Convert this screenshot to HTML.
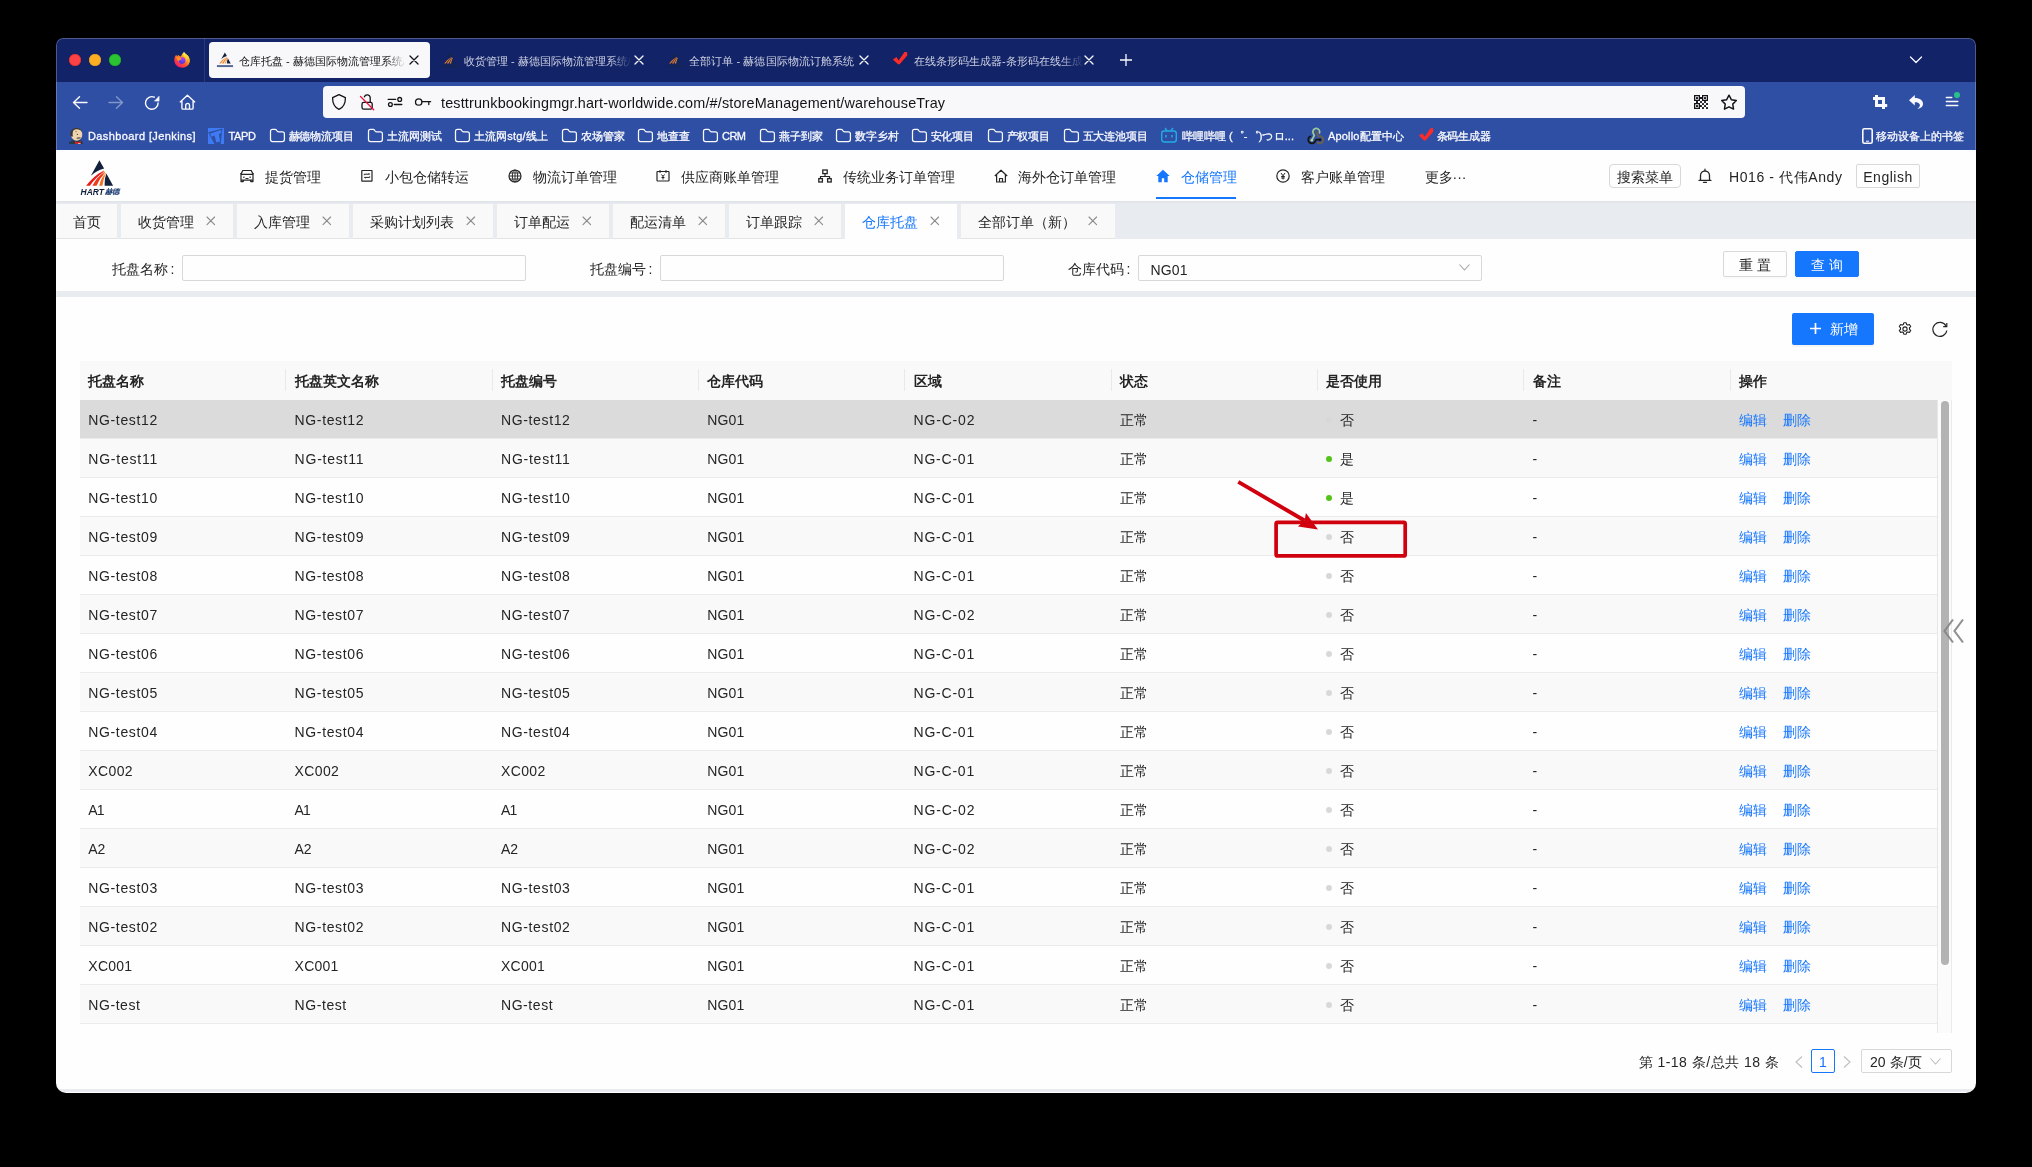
<!DOCTYPE html>
<html lang="zh"><head><meta charset="utf-8"><title>仓库托盘</title>
<style>
*{box-sizing:border-box;margin:0;padding:0}
html,body{width:2032px;height:1167px;background:#000;overflow:hidden}
body{font-family:"Liberation Sans",sans-serif;font-size:14px;color:#262626;position:relative}
#win{position:absolute;left:0;top:0;width:2032px;height:1167px;clip-path:inset(38px 56px 74px 56px round 7px 7px 10px 10px);background:#fff;will-change:transform;opacity:.9999}
.a{position:absolute;white-space:nowrap}
.j{display:inline-block;text-align-last:justify;white-space:nowrap}
svg{position:absolute;overflow:visible}
/* browser chrome */
#tabbar{left:56px;top:38px;width:1920px;height:44px;background:#132468}
#navbar{left:56px;top:82px;width:1920px;height:68px;background:#3050a5}
#chromeline{left:56px;top:150px;width:1920px;height:1px;background:#08196a}
#acttab{left:209px;top:42px;width:221px;height:36px;background:#f9f9fb;border-radius:4px}
#tabsep{left:204px;top:38px;width:1px;height:44px;background:#2a3a78}
.tl{width:11.8px;height:11.8px;border-radius:50%;top:54px}
.tt{font-size:11px;top:54px;line-height:14px;color:#cfd3e4;overflow:hidden;text-align-last:justify}
#urlbar{left:323px;top:86px;width:1422px;height:32px;background:#f9f9fb;border-radius:4px}
.url{left:441px;top:95px;font-size:14.4px;line-height:17px;color:#15141a}
.bm{top:129px;font-size:11px;line-height:14px;color:#fbfbfe;-webkit-text-stroke:.3px #fbfbfe}
/* app */
#header{left:56px;top:150px;width:1920px;height:51px;background:#fff}
#hshadow{left:56px;top:201px;width:1920px;height:3px;background:linear-gradient(#dfe2e7,#e9ecf0)}
#tabsbg{left:56px;top:201px;width:1920px;height:96px;background:#e9ecf0}
.mi{top:167.5px;line-height:18px;font-size:14px;color:#262626;letter-spacing:0}
.ptab{top:204px;height:35px;background:#fafafa;border-bottom:1px solid #e4e4e4;font-size:14px;line-height:36px;padding-left:16.5px;color:#262626}
.ptab.on{background:#fff;color:#1677ff;border-bottom:0}
.ptab i{position:absolute;right:17px;top:0;font-style:normal;color:#8c8c8c;font-size:13px}
#search{left:56px;top:239px;width:1920px;height:52px;background:#fff}
.lbl{top:260px;line-height:18px;font-size:14px}
.inp{top:255px;width:344px;height:26px;border:1px solid #d9d9d9;border-radius:2px;background:#fff}
.btn{height:26px;top:251px;width:64px;border:1px solid #d9d9d9;border-radius:2px;background:#fff;text-align:center;line-height:26px;font-size:14px;box-shadow:0 2px 0 rgba(0,0,0,.015)}
.btn.p{background:#1677ff;border-color:#1677ff;color:#fff}
#card{left:56px;top:297px;width:1920px;height:792px;background:#fff}
#thead{left:80px;top:361px;width:1872px;height:39px;background:#fafafa}
.th{top:361px;height:39px;line-height:40px;font-weight:bold;font-size:14px;color:#262626}
.ths{top:369px;width:1px;height:22px;background:#eaeaea}
.row{left:80px;width:1857px;height:39px;border-bottom:1px solid #ececec}
.row.e{background:#fafafa}
.row.h{background:#dcdcdc}
.c{height:39px;line-height:40px;font-size:14px;color:#262626}
.lk{color:#1677ff;letter-spacing:0}
.dot{width:6px;height:6px;border-radius:50%;background:#d9d9d9}
.dot.g{background:#52c41a}
#track{left:1937px;top:400px;width:15px;height:633px;background:#fcfcfc;border-left:1px solid #e8e8e8;border-right:1px solid #ececec}
#thumb{left:1941px;top:401px;width:8px;height:564px;background:#b4b4b4;border-radius:4px}
</style></head>
<body>
<div id="win">
<div class="a " id="tabbar"></div>
<div class="a " id="navbar"></div>
<div class="a " id="chromeline"></div>
<div class="a " id="tabsep"></div>
<div class="a " id="acttab"></div>
<div class="a tl" style="left:69px;background:#fd4346;box-shadow:inset 0 0 0 .6px #e2282c"></div>
<div class="a tl" style="left:89px;background:#fdb025;box-shadow:inset 0 0 0 .6px #e09b1f"></div>
<div class="a tl" style="left:109px;background:#2cc433;box-shadow:inset 0 0 0 .6px #1fa925"></div>
<div class="a tt" style="left:239px;width:165px;color:#15141a">仓库托盘 - 赫德国际物流管理系统/</div>
<div class="a tt" style="left:464px;width:166px">收货管理 - 赫德国际物流管理系统/</div>
<div class="a tt" style="left:689px;width:165.3px">全部订单 - 赫德国际物流订舱系统</div>
<div class="a tt" style="left:914px;width:168px">在线条形码生成器-条形码在线生成</div>
<div class="a " style="left:386px;top:52px;width:20px;height:18px;background:linear-gradient(90deg,rgba(249,249,251,0),#f9f9fb)"></div>
<div class="a " style="left:610px;top:52px;width:22px;height:18px;background:linear-gradient(90deg,rgba(19,36,104,0),#132468)"></div>
<div class="a " style="left:1060px;top:52px;width:24px;height:18px;background:linear-gradient(90deg,rgba(19,36,104,0),#132468)"></div>
<svg style="left:410px;top:56px" width="8" height="8" viewBox="0 0 8 8"><path d="M0 0L8 8M8 0L0 8" stroke="#15141a" stroke-width="1.3" fill="none" stroke-linecap="round"/></svg>
<svg style="left:635px;top:56px" width="8" height="8" viewBox="0 0 8 8"><path d="M0 0L8 8M8 0L0 8" stroke="#fbfbfe" stroke-width="1.3" fill="none" stroke-linecap="round"/></svg>
<svg style="left:860px;top:56px" width="8" height="8" viewBox="0 0 8 8"><path d="M0 0L8 8M8 0L0 8" stroke="#fbfbfe" stroke-width="1.3" fill="none" stroke-linecap="round"/></svg>
<svg style="left:1085px;top:56px" width="8" height="8" viewBox="0 0 8 8"><path d="M0 0L8 8M8 0L0 8" stroke="#fbfbfe" stroke-width="1.3" fill="none" stroke-linecap="round"/></svg>
<svg style="left:0;top:0" width="2032" height="1167" viewBox="0 0 2032 1167"><path transform="translate(0 0)" d="M892.9 59.4L896.5 57.1 898.6 60.6 904.5 52 907 51.9 907.3 55.5 899.6 64.3H898z" fill="#fb2c2a"/></svg>
<svg style="left:1120px;top:54px" width="12" height="12" viewBox="0 0 12 12"><path d="M6 0V12M0 6H12" stroke="#fbfbfe" stroke-width="1.3" fill="none"/></svg>
<svg style="left:1910px;top:56px" width="12" height="8" viewBox="0 0 12 8"><path d="M.5 1L6 6.5 11.5 1" stroke="#fbfbfe" stroke-width="1.3" fill="none" stroke-linecap="round" stroke-linejoin="round"/></svg>
<div class="a " id="urlbar"></div>
<div class="a url" id="f1" style=";letter-spacing:0.160px;width:504.20px;text-align-last:justify">testtrunkbookingmgr.hart-worldwide.com/#/storeManagement/warehouseTray</div>
<svg style="left:0;top:0" width="2032" height="1167" viewBox="0 0 2032 1167" fill="none" stroke-linecap="round" stroke-linejoin="round"><path d="M87 102.5H73.6M79.5 96.7L73.5 102.5 79.5 108.3" stroke="#fbfbfe" stroke-width="1.4"/><path d="M109 102.5H122.4M116.5 96.7L122.5 102.5 116.5 108.3" stroke="#fbfbfe" stroke-width="1.4" opacity=".42"/><path d="M158.1 103A6.3 6.3 0 1 1 154.3 97.2" stroke="#fbfbfe" stroke-width="1.4"/><path d="M154.6 100.9L159.1 96.2V100.9z" fill="#fbfbfe" stroke="#fbfbfe" stroke-width=".5"/><path d="M180.2 101.9L187.4 95.3 194.7 101.9M181.9 100.6V107.9a1.2 1.2 0 0 0 1.2 1.2H191.9a1.2 1.2 0 0 0 1.2-1.2V100.6M185.7 109V105.3a1.9 1.9 0 0 1 3.8 0V109" stroke="#fbfbfe" stroke-width="1.4"/><path d="M339 94.6L345.4 97.7C345.5 103.5 343.4 107.3 339 109.4 334.6 107.3 332.5 103.5 332.6 97.7z" stroke="#15141a" stroke-width="1.3"/><rect x="362" y="102.3" width="10.2" height="6.8" rx="1.6" stroke="#15141a" stroke-width="1.3"/><path d="M364.4 96.8A3 3 0 0 1 370.2 97.8V102" stroke="#15141a" stroke-width="1.3"/><path d="M360.5 96.5L373.7 109.8" stroke="#e8163c" stroke-width="1.3"/><path d="M388.2 99.4H395.7M394.3 104.5H401.8" stroke="#15141a" stroke-width="1.3"/><circle cx="399.7" cy="99.4" r="1.9" stroke="#15141a" stroke-width="1.3"/><circle cx="390.4" cy="104.5" r="1.9" stroke="#15141a" stroke-width="1.3"/><circle cx="418.7" cy="102" r="3.2" stroke="#15141a" stroke-width="1.3"/><path d="M422 101.7H430.6M428.8 101.9V104.6" stroke="#15141a" stroke-width="1.3"/><path d="M1694 95h6v6h-6zM1695.25 96.25h3.5v3.5h-3.5z" fill="#15141a" fill-rule="evenodd"/><rect x="1696" y="97" width="2" height="2" rx=".6" fill="#15141a"/><path d="M1702 95h6v6h-6zM1703.25 96.25h3.5v3.5h-3.5z" fill="#15141a" fill-rule="evenodd"/><rect x="1704" y="97" width="2" height="2" rx=".6" fill="#15141a"/><path d="M1694 103h6v6h-6zM1695.25 104.25h3.5v3.5h-3.5z" fill="#15141a" fill-rule="evenodd"/><rect x="1696" y="105" width="2" height="2" rx=".6" fill="#15141a"/><rect x="1700.05" y="97.05" width="1.9" height="1.9" rx=".5" fill="#15141a"/><rect x="1696.05" y="101.05" width="1.9" height="1.9" rx=".5" fill="#15141a"/><rect x="1700.05" y="101.05" width="1.9" height="1.9" rx=".5" fill="#15141a"/><rect x="1704.05" y="101.05" width="1.9" height="1.9" rx=".5" fill="#15141a"/><rect x="1702.05" y="103.05" width="1.9" height="1.9" rx=".5" fill="#15141a"/><rect x="1706.05" y="103.05" width="1.9" height="1.9" rx=".5" fill="#15141a"/><rect x="1700.05" y="105.05" width="1.9" height="1.9" rx=".5" fill="#15141a"/><rect x="1704.05" y="105.05" width="1.9" height="1.9" rx=".5" fill="#15141a"/><rect x="1702.05" y="107.05" width="1.9" height="1.9" rx=".5" fill="#15141a"/><rect x="1706.05" y="107.05" width="1.9" height="1.9" rx=".5" fill="#15141a"/><path d="M1699.5 98H1702.5M1697 100.5V103.5M1699.5 106H1701" stroke="#15141a" stroke-width="1.5" stroke-linecap="butt"/><path d="M1729.00 95.20L1731.32 99.70L1736.32 100.52L1732.76 104.12L1733.53 109.13L1729.00 106.85L1724.47 109.13L1725.24 104.12L1721.68 100.52L1726.68 99.70z" stroke="#15141a" stroke-width="1.450"/><path d="M1876.5 94.9V105.5H1887.2M1873 98.5H1883.5V108.9" stroke="#fbfbfe" stroke-width="3" stroke-linecap="butt" stroke-linejoin="miter"/><path d="M1909 100.2L1914.8 95V98C1920 98 1923.3 100.6 1923 104.2 1922.8 106.6 1921 108.3 1917.3 108.9 1919.5 107.8 1920.2 106 1919.8 104.6 1919.2 102.8 1917.5 102.3 1914.8 102.3V105.4z" fill="#fbfbfe" stroke="none"/><path d="M1946.3 97.5H1951.8M1946.3 101.5H1957.8M1946.3 105.5H1957.8" stroke="#fbfbfe" stroke-width="1.4"/><circle cx="1957" cy="95.1" r="3.050" fill="#2cbe8c"/></svg>
<svg style="left:0;top:0" width="2032" height="1167" viewBox="0 0 2032 1167"><path d="M68.9 144C69 141.8 70.5 140.5 73 140.2L80 140.2C82 140.5 82.9 141.8 82.9 144z" fill="#223e4d"/><ellipse cx="76.6" cy="134.4" rx="5.7" ry="6.3" fill="#f0d6b0"/><path d="M70.9 136.5C69.8 134 70.2 131 72.5 129.3 74.5 127.8 78.5 127.6 80.5 129.2 81.5 130 82 131 82.2 132 81 130.3 79 129.2 76.5 129.3 74.5 129.4 73.2 130.3 72.8 132 72.5 133.5 72.6 135 72.9 136.5z" fill="#3a3633"/><ellipse cx="78.6" cy="138.1" rx="2.2" ry="1" fill="#857a66" transform="rotate(-8 78.6 138.1)"/><circle cx="77.4" cy="134.4" r=".7" fill="#5a4d3d"/><path d="M75 131.7H76.8" stroke="#8a7a62" stroke-width=".8"/><path d="M75 141L77.8 142.3 80.8 140.9V144H75z" fill="#d81f26"/><path d="M78 143.3H80.5V144H78z" fill="#e8e8e8"/></svg>
<div class="a bm" id="f2" style="left:88px;letter-spacing:0.401px;width:107.92px;text-align-last:justify">Dashboard [Jenkins]</div>
<svg style="left:0;top:0" width="2032" height="1167" viewBox="0 0 2032 1167"><rect x="208" y="128" width="16" height="16" fill="#3f7bf5"/><path d="M208.2 132.3L222.4 128.5 220.7 144H214.5z" fill="#3050a5"/><path d="M210.1 133.7L220.6 130 221.8 132.8 218.9 133.9 220.2 141.5 216.3 142.5 214.6 135.6 211.5 136.8z" fill="#3f7bf5"/></svg>
<div class="a bm" id="f3" style="left:228.5px;letter-spacing:-0.344px;width:27.18px;text-align-last:justify">TAPD</div>
<svg style="left:0;top:0" width="2032" height="1167" viewBox="0 0 2032 1167"><path transform="translate(0 0)" d="M270.5 131.4a2 2 0 0 1 2-2h2.6c.8 0 1.2.4 1.6 1l.5.7c.4.5.8.7 1.4.7h3.8a2 2 0 0 1 2 2v5.8a2 2 0 0 1-2 2h-9.9a2 2 0 0 1-2-2z" stroke="#fbfbfe" stroke-width="1.250" fill="none"/></svg>
<div class="a bm" id="f4" style="left:288.5px;letter-spacing:-0.100px;width:65.42px;text-align-last:justify">赫德物流项目</div>
<svg style="left:0;top:0" width="2032" height="1167" viewBox="0 0 2032 1167"><path transform="translate(98 0)" d="M270.5 131.4a2 2 0 0 1 2-2h2.6c.8 0 1.2.4 1.6 1l.5.7c.4.5.8.7 1.4.7h3.8a2 2 0 0 1 2 2v5.8a2 2 0 0 1-2 2h-9.9a2 2 0 0 1-2-2z" stroke="#fbfbfe" stroke-width="1.250" fill="none"/></svg>
<div class="a bm" id="f5" style="left:387px;letter-spacing:0.000px;width:55.02px;text-align-last:justify">土流网测试</div>
<svg style="left:0;top:0" width="2032" height="1167" viewBox="0 0 2032 1167"><path transform="translate(185 0)" d="M270.5 131.4a2 2 0 0 1 2-2h2.6c.8 0 1.2.4 1.6 1l.5.7c.4.5.8.7 1.4.7h3.8a2 2 0 0 1 2 2v5.8a2 2 0 0 1-2 2h-9.9a2 2 0 0 1-2-2z" stroke="#fbfbfe" stroke-width="1.250" fill="none"/></svg>
<div class="a bm" id="f6" style="left:473.5px;letter-spacing:0.221px;width:74.74px;text-align-last:justify">土流网stg/线上</div>
<svg style="left:0;top:0" width="2032" height="1167" viewBox="0 0 2032 1167"><path transform="translate(292 0)" d="M270.5 131.4a2 2 0 0 1 2-2h2.6c.8 0 1.2.4 1.6 1l.5.7c.4.5.8.7 1.4.7h3.8a2 2 0 0 1 2 2v5.8a2 2 0 0 1-2 2h-9.9a2 2 0 0 1-2-2z" stroke="#fbfbfe" stroke-width="1.250" fill="none"/></svg>
<div class="a bm" id="f7" style="left:580.5px;letter-spacing:0.000px;width:44.02px;text-align-last:justify">农场管家</div>
<svg style="left:0;top:0" width="2032" height="1167" viewBox="0 0 2032 1167"><path transform="translate(368 0)" d="M270.5 131.4a2 2 0 0 1 2-2h2.6c.8 0 1.2.4 1.6 1l.5.7c.4.5.8.7 1.4.7h3.8a2 2 0 0 1 2 2v5.8a2 2 0 0 1-2 2h-9.9a2 2 0 0 1-2-2z" stroke="#fbfbfe" stroke-width="1.250" fill="none"/></svg>
<div class="a bm" id="f8" style="left:656.5px;letter-spacing:0.000px;width:33.02px;text-align-last:justify">地查查</div>
<svg style="left:0;top:0" width="2032" height="1167" viewBox="0 0 2032 1167"><path transform="translate(433 0)" d="M270.5 131.4a2 2 0 0 1 2-2h2.6c.8 0 1.2.4 1.6 1l.5.7c.4.5.8.7 1.4.7h3.8a2 2 0 0 1 2 2v5.8a2 2 0 0 1-2 2h-9.9a2 2 0 0 1-2-2z" stroke="#fbfbfe" stroke-width="1.250" fill="none"/></svg>
<div class="a bm" id="f9" style="left:722px;letter-spacing:-0.531px;width:23.49px;text-align-last:justify">CRM</div>
<svg style="left:0;top:0" width="2032" height="1167" viewBox="0 0 2032 1167"><path transform="translate(490 0)" d="M270.5 131.4a2 2 0 0 1 2-2h2.6c.8 0 1.2.4 1.6 1l.5.7c.4.5.8.7 1.4.7h3.8a2 2 0 0 1 2 2v5.8a2 2 0 0 1-2 2h-9.9a2 2 0 0 1-2-2z" stroke="#fbfbfe" stroke-width="1.250" fill="none"/></svg>
<div class="a bm" id="f10" style="left:778.5px;letter-spacing:0.000px;width:44.02px;text-align-last:justify">燕子到家</div>
<svg style="left:0;top:0" width="2032" height="1167" viewBox="0 0 2032 1167"><path transform="translate(566 0)" d="M270.5 131.4a2 2 0 0 1 2-2h2.6c.8 0 1.2.4 1.6 1l.5.7c.4.5.8.7 1.4.7h3.8a2 2 0 0 1 2 2v5.8a2 2 0 0 1-2 2h-9.9a2 2 0 0 1-2-2z" stroke="#fbfbfe" stroke-width="1.250" fill="none"/></svg>
<div class="a bm" id="f11" style="left:854.5px;letter-spacing:0.000px;width:44.02px;text-align-last:justify">数字乡村</div>
<svg style="left:0;top:0" width="2032" height="1167" viewBox="0 0 2032 1167"><path transform="translate(642 0)" d="M270.5 131.4a2 2 0 0 1 2-2h2.6c.8 0 1.2.4 1.6 1l.5.7c.4.5.8.7 1.4.7h3.8a2 2 0 0 1 2 2v5.8a2 2 0 0 1-2 2h-9.9a2 2 0 0 1-2-2z" stroke="#fbfbfe" stroke-width="1.250" fill="none"/></svg>
<div class="a bm" id="f12" style="left:930.5px;letter-spacing:-0.167px;width:43.35px;text-align-last:justify">安化项目</div>
<svg style="left:0;top:0" width="2032" height="1167" viewBox="0 0 2032 1167"><path transform="translate(718 0)" d="M270.5 131.4a2 2 0 0 1 2-2h2.6c.8 0 1.2.4 1.6 1l.5.7c.4.5.8.7 1.4.7h3.8a2 2 0 0 1 2 2v5.8a2 2 0 0 1-2 2h-9.9a2 2 0 0 1-2-2z" stroke="#fbfbfe" stroke-width="1.250" fill="none"/></svg>
<div class="a bm" id="f13" style="left:1006.5px;letter-spacing:-0.167px;width:43.35px;text-align-last:justify">产权项目</div>
<svg style="left:0;top:0" width="2032" height="1167" viewBox="0 0 2032 1167"><path transform="translate(794 0)" d="M270.5 131.4a2 2 0 0 1 2-2h2.6c.8 0 1.2.4 1.6 1l.5.7c.4.5.8.7 1.4.7h3.8a2 2 0 0 1 2 2v5.8a2 2 0 0 1-2 2h-9.9a2 2 0 0 1-2-2z" stroke="#fbfbfe" stroke-width="1.250" fill="none"/></svg>
<div class="a bm" id="f14" style="left:1082.5px;letter-spacing:-0.100px;width:65.42px;text-align-last:justify">五大连池项目</div>
<svg style="left:1161px;top:128px" width="16" height="15" viewBox="0 0 16 15"><path d="M4 0l2 2.5M12 0l-2 2.5" stroke="#23ade5" stroke-width="1.3" fill="none"/><rect x=".7" y="3" width="14.6" height="11" rx="2.5" stroke="#23ade5" stroke-width="1.4" fill="none"/><path d="M5 7v2.5M11 7v2.5" stroke="#23ade5" stroke-width="1.5"/></svg>
<div class="a bm" id="f15" style="left:1181.5px;letter-spacing:0.092px;width:112.62px;text-align-last:justify">哔哩哔哩 (゜-゜)つロ...</div>
<svg style="left:0;top:0" width="2032" height="1167" viewBox="0 0 2032 1167" fill="none" stroke-width="1.750" stroke-linecap="round"><path d="M1319.5 132.9A3.4 3.4 0 1 0 1313.3 133.5L1314.3 135.4 1311.8 140.2" stroke="#9cc89a"/><path d="M1310.5 136.3A3.7 3.7 0 1 0 1315.4 141C1315.5 139.9 1316.2 139.7 1317 139.7H1320" stroke="#17150f"/><path d="M1316.2 131.8L1318.4 136.6A3.5 3.5 0 1 1 1317.5 142.5" stroke="#6b6250"/><circle cx="1311.8" cy="140.3" r="1.3" fill="#b7db92" stroke="none"/><circle cx="1316.2" cy="131.9" r="1.1" fill="#6b5a42" stroke="none"/><circle cx="1320.1" cy="139.7" r="1.3" fill="#17150f" stroke="none"/></svg>
<div class="a bm" id="f16" style="left:1328px;letter-spacing:0.158px;width:76.18px;text-align-last:justify">Apollo配置中心</div>
<svg style="left:0;top:0" width="2032" height="1167" viewBox="0 0 2032 1167"><path transform="translate(526 76.2)" d="M892.9 59.4L896.5 57.1 898.6 60.6 904.5 52 907 51.9 907.3 55.5 899.6 64.3H898z" fill="#fb2c2a"/></svg>
<div class="a bm" id="f17" style="left:1436.5px;letter-spacing:-0.125px;width:54.40px;text-align-last:justify">条码生成器</div>
<svg style="left:1862px;top:128px" width="11" height="16" viewBox="0 0 11 16"><rect x=".8" y=".8" width="9.4" height="14.4" rx="1.5" stroke="#fbfbfe" stroke-width="1.6" fill="none"/><path d="M4 13.2H7" stroke="#fbfbfe" stroke-width="1"/></svg>
<div class="a bm" id="f18" style="left:1876px;letter-spacing:0.000px;width:88.02px;text-align-last:justify">移动设备上的书签</div>
<div class="a " id="tabsbg"></div>
<div class="a " id="header"></div>
<div class="a " id="hshadow"></div>
<svg style="left:0;top:0" width="2032" height="1167" viewBox="0 0 2032 1167"><defs><linearGradient id="lg1" gradientUnits="userSpaceOnUse" x1="88" y1="186" x2="106" y2="170.5"><stop offset="0" stop-color="#e8201a"/><stop offset=".72" stop-color="#e8201a"/><stop offset="1" stop-color="#f7a35c"/></linearGradient><linearGradient id="lg2" gradientUnits="userSpaceOnUse" x1="88" y1="186" x2="106" y2="170.5"><stop offset="0" stop-color="#ee3b1b"/><stop offset=".72" stop-color="#ee3b1b"/><stop offset="1" stop-color="#f9b06a"/></linearGradient><linearGradient id="lg3" gradientUnits="userSpaceOnUse" x1="88" y1="186" x2="106" y2="170.5"><stop offset="0" stop-color="#f25f21"/><stop offset=".72" stop-color="#f47a2b"/><stop offset="1" stop-color="#fbc084"/></linearGradient><linearGradient id="ffb" gradientUnits="userSpaceOnUse" x1="188" y1="53" x2="177" y2="67"><stop offset="0" stop-color="#fff44f"/><stop offset=".3" stop-color="#ffb01f"/><stop offset=".6" stop-color="#ff5a2a"/><stop offset="1" stop-color="#f0127a"/></linearGradient><linearGradient id="ffy" gradientUnits="userSpaceOnUse" x1="185" y1="52" x2="187.5" y2="64"><stop offset="0" stop-color="#fff44f"/><stop offset="1" stop-color="#ffa51f"/></linearGradient><linearGradient id="ffg" gradientUnits="userSpaceOnUse" x1="183" y1="57" x2="181" y2="64"><stop offset="0" stop-color="#c139e6"/><stop offset=".5" stop-color="#7542ff"/><stop offset="1" stop-color="#3c35d8"/></linearGradient></defs><g><path d="M99.4 160.3L104.1 168.4Q96 170.5 90.9 175.8z" fill="#14213d"/><path d="M106.4 173.6L113.1 185.7H104.6Q104.3 178.5 106.4 173.6z" fill="#14213d"/><g opacity="1"><path d="M86.1 185.7Q93 176.5 103.6 170.5L104.4 171.4Q95.5 177.5 89.9 185.7z" fill="url(#lg1)"/><path d="M92.4 185.7Q97 177 104.7 171.6L105.3 172.5Q99.5 178.5 96.5 185.7z" fill="url(#lg2)"/><path d="M99.2 185.7Q101 178 105.6 172.7L106.1 173.6Q103.2 179 102.4 185.7z" fill="url(#lg3)"/></g><text x="80.6" y="194.7" font-family="Liberation Sans" font-weight="bold" font-style="italic" font-size="8.8" fill="#14213d" textLength="23.4" lengthAdjust="spacingAndGlyphs">HART</text><text x="104.6" y="194.4" font-family="Liberation Sans" font-weight="bold" font-style="italic" font-size="7.2" fill="#1d3d73" textLength="14.4" lengthAdjust="spacingAndGlyphs">赫德</text></g><g transform="translate(182.1 -16.4) scale(.43)"><path d="M99.4 160.3L104.1 168.4Q96 170.5 90.9 175.8z" fill="#14213d"/><path d="M106.4 173.6L113.1 185.7H104.6Q104.3 178.5 106.4 173.6z" fill="#14213d"/><g opacity="1"><path d="M86.1 185.7Q93 176.5 103.6 170.5L104.4 171.4Q95.5 177.5 89.9 185.7z" fill="#f58220"/><path d="M92.4 185.7Q97 177 104.7 171.6L105.3 172.5Q99.5 178.5 96.5 185.7z" fill="#f58220"/><path d="M99.2 185.7Q101 178 105.6 172.7L106.1 173.6Q103.2 179 102.4 185.7z" fill="#f7953a"/></g><rect x="81" y="189.5" width="37.5" height="4.6" fill="#3b5283" opacity=".85"/></g><g transform="translate(407.1 -16.4) scale(.43)"><path d="M99.4 160.3L104.1 168.4Q96 170.5 90.9 175.8z" fill="#17264f"/><path d="M106.4 173.6L113.1 185.7H104.6Q104.3 178.5 106.4 173.6z" fill="#17264f"/><g opacity="0.95"><path d="M86.1 185.7Q93 176.5 103.6 170.5L104.4 171.4Q95.5 177.5 89.9 185.7z" fill="#f58220"/><path d="M92.4 185.7Q97 177 104.7 171.6L105.3 172.5Q99.5 178.5 96.5 185.7z" fill="#f58220"/><path d="M99.2 185.7Q101 178 105.6 172.7L106.1 173.6Q103.2 179 102.4 185.7z" fill="#f7953a"/></g><rect x="81" y="189.5" width="37.5" height="4.6" fill="#17264f" opacity=".85"/></g><g transform="translate(632.1 -16.4) scale(.43)"><path d="M99.4 160.3L104.1 168.4Q96 170.5 90.9 175.8z" fill="#17264f"/><path d="M106.4 173.6L113.1 185.7H104.6Q104.3 178.5 106.4 173.6z" fill="#17264f"/><g opacity="0.95"><path d="M86.1 185.7Q93 176.5 103.6 170.5L104.4 171.4Q95.5 177.5 89.9 185.7z" fill="#f58220"/><path d="M92.4 185.7Q97 177 104.7 171.6L105.3 172.5Q99.5 178.5 96.5 185.7z" fill="#f58220"/><path d="M99.2 185.7Q101 178 105.6 172.7L106.1 173.6Q103.2 179 102.4 185.7z" fill="#f7953a"/></g><rect x="81" y="189.5" width="37.5" height="4.6" fill="#17264f" opacity=".85"/></g><path d="M184 51.9C185 53.6 187.2 54.6 188.5 56.6 190.1 59.1 190 62.6 188.5 64.7 186.8 67 183.8 67.8 181.4 67.6 177.4 67.3 174.3 64.3 174.3 60 174.3 57.8 175 56 176.3 54.7 176.5 55.5 176.8 56 177.3 56.3 177.6 55.6 178 55.2 178.6 55 179 55.8 179.8 56.3 180.9 56.5 181.5 55 182.3 53.5 184 51.9z" fill="url(#ffb)"/><path d="M184 51.9C185 53.6 187.2 54.6 188.5 56.6 190.1 59.1 190 62.6 188.5 64.7 189.2 62 188.6 59.6 187.1 58 187.3 59.5 187 60.6 186.5 61.5 186.4 58.2 184.5 56.8 183.6 55.5 183 54.5 183.2 53 184 51.9z" fill="url(#ffy)"/><circle cx="182.1" cy="60.6" r="3.3" fill="url(#ffg)"/><path d="M176.2 57.3C178 56.9 180.6 57.4 182.3 59.3 180.7 59.2 179.6 59.8 179.1 61 177.8 60.6 176.6 59.3 176.2 57.3z" fill="#ff9a1f"/></svg>
<svg style="left:240px;top:169px" width="14" height="14" viewBox="0 0 14 14"><path d="M1 5.3L2.7 1.5H11.3L13 5.3M1 5.3H13V11.2H1zM1 11.2V12.6H3.3V11.2M10.7 11.2V12.6H13V11.2M.2 4.7H1.1M12.9 4.7H13.8" stroke="#262626" stroke-width="1.2" fill="none" stroke-linejoin="round"/><path d="M3 8.2H4.7M9.3 8.2H11M5.5 9.5H8.5" stroke="#262626" stroke-width="1"/></svg>
<div class="a mi" style="left:265px;color:#262626;width:56px;text-align-last:justify">提货管理</div>
<svg style="left:360px;top:169px" width="14" height="14" viewBox="0 0 14 14"><rect x="1.8" y="1.5" width="10.2" height="10.6" rx=".3" stroke="#262626" stroke-width="1.2" fill="none"/><path d="M4.3 6.2V5.2H9.6L8.6 4.2M9.7 7.4V8.4H4.4L5.4 9.4" stroke="#262626" stroke-width="1" fill="none"/></svg>
<div class="a mi" style="left:385px;color:#262626;width:84px;text-align-last:justify">小包仓储转运</div>
<svg style="left:507.5px;top:169px" width="14" height="14" viewBox="0 0 14 14"><circle cx="7" cy="7" r="6" stroke="#262626" stroke-width="1.2" fill="none"/><ellipse cx="7" cy="7" rx="2.7" ry="6" stroke="#262626" stroke-width="1" fill="none"/><path d="M1 7h12M2 4h10M2 10h10M7 1v12" stroke="#262626" stroke-width=".9" fill="none"/></svg>
<div class="a mi" style="left:532.5px;color:#262626;width:84px;text-align-last:justify">物流订单管理</div>
<svg style="left:656px;top:169px" width="14" height="14" viewBox="0 0 14 14"><rect x="1" y="2.5" width="12" height="9.5" rx=".5" stroke="#262626" stroke-width="1.2" fill="none"/><path d="M4 1v3M10 1v3M5.5 5.5L7 7.5l1.5-2M7 7.5v3M5.5 8.5h3" stroke="#262626" stroke-width="1" fill="none"/></svg>
<div class="a mi" style="left:680.5px;color:#262626;width:98px;text-align-last:justify">供应商账单管理</div>
<svg style="left:818px;top:169px" width="14" height="14" viewBox="0 0 14 14"><rect x="4.8" y="1" width="4.4" height="3.6" stroke="#262626" stroke-width="1.3" fill="none"/><path d="M7 4.6V7.5M2.5 9.5V7.5h9v2" stroke="#262626" stroke-width="1.2" fill="none"/><rect x=".8" y="9.6" width="3.6" height="3.4" stroke="#262626" stroke-width="1.3" fill="none"/><rect x="9.6" y="9.6" width="3.6" height="3.4" stroke="#262626" stroke-width="1.3" fill="none"/></svg>
<div class="a mi" style="left:842.5px;color:#262626;width:112px;text-align-last:justify">传统业务订单管理</div>
<svg style="left:994px;top:169px" width="14" height="14" viewBox="0 0 14 14"><path d="M.8 7L7 1.2 13.2 7M2.6 5.8V13h8.8V5.8M5.5 13V9.5h3V13" stroke="#262626" stroke-width="1.2" fill="none" stroke-linejoin="round"/><g fill="#262626"/></svg>
<div class="a mi" style="left:1018px;color:#262626;width:98px;text-align-last:justify">海外仓订单管理</div>
<svg style="left:1156px;top:169px" width="14" height="14" viewBox="0 0 14 14"><path d="M7 .8L.3 7h2V13.2h3.5V9.2h2.4v4h3.5V7h2z" fill="#1677ff"/><g fill="#1677ff"/></svg>
<div class="a mi" style="left:1180.5px;color:#1677ff;width:56px;text-align-last:justify">仓储管理</div>
<svg style="left:1276px;top:169px" width="14" height="14" viewBox="0 0 14 14"><circle cx="7" cy="7" r="6.2" stroke="#262626" stroke-width="1.2" fill="none"/><path d="M5 4l2 2.8L9 4M7 6.8V10.5M5.2 7.5h3.6M5.2 9h3.6" stroke="#262626" stroke-width="1" fill="none"/></svg>
<div class="a mi" style="left:1300.5px;color:#262626;width:84px;text-align-last:justify">客户账单管理</div>
<div class="a mi" style="left:1424.5px">更多···</div>
<div class="a " style="left:1156px;top:197px;width:80px;height:2px;background:#1677ff"></div>
<div class="a " style="left:1609px;top:164px;width:72px;height:24px;border:1px solid #d9d9d9;border-radius:4px;text-align:center;line-height:24px;font-size:14px"><span class="j" style="width:56px">搜索菜单</span></div>
<svg style="left:1698px;top:168px" width="14" height="16" viewBox="0 0 14 16"><path d="M7 1.2V2.5M2.5 12V7.5a4.5 4.5 0 0 1 9 0V12M1 12.3H13M5.5 14.3H8.5" stroke="#262626" stroke-width="1.3" fill="none" stroke-linecap="round"/></svg>
<div class="a mi" id="f19" style="left:1729px;letter-spacing:0.598px;width:113.62px;text-align-last:justify">H016 - 代伟Andy</div>
<div class="a " style="left:1856px;top:164px;width:64px;height:24px;border:1px solid #d9d9d9;border-radius:2px;text-align:center;line-height:24px;font-size:14px;letter-spacing:.5px">English</div>
<div class="a ptab" style="left:56px;width:61px"><span class="j" style="width:28px">首页</span></div>
<div class="a ptab" style="left:121px;width:112px"><span class="j" style="width:56px">收货管理</span></div>
<svg style="left:207.2px;top:217.1px" width="7.6" height="7.6" viewBox="0 0 7.6 7.6"><path d="M0 0L7.6 7.6M7.6 0L0 7.6" stroke="#8c8c8c" stroke-width="1.1" fill="none" stroke-linecap="round"/></svg>
<div class="a ptab" style="left:237px;width:112px"><span class="j" style="width:56px">入库管理</span></div>
<svg style="left:323.2px;top:217.1px" width="7.6" height="7.6" viewBox="0 0 7.6 7.6"><path d="M0 0L7.6 7.6M7.6 0L0 7.6" stroke="#8c8c8c" stroke-width="1.1" fill="none" stroke-linecap="round"/></svg>
<div class="a ptab" style="left:353px;width:140px"><span class="j" style="width:84px">采购计划列表</span></div>
<svg style="left:467.2px;top:217.1px" width="7.6" height="7.6" viewBox="0 0 7.6 7.6"><path d="M0 0L7.6 7.6M7.6 0L0 7.6" stroke="#8c8c8c" stroke-width="1.1" fill="none" stroke-linecap="round"/></svg>
<div class="a ptab" style="left:497px;width:112px"><span class="j" style="width:56px">订单配运</span></div>
<svg style="left:583.2px;top:217.1px" width="7.6" height="7.6" viewBox="0 0 7.6 7.6"><path d="M0 0L7.6 7.6M7.6 0L0 7.6" stroke="#8c8c8c" stroke-width="1.1" fill="none" stroke-linecap="round"/></svg>
<div class="a ptab" style="left:613px;width:112px"><span class="j" style="width:56px">配运清单</span></div>
<svg style="left:699.2px;top:217.1px" width="7.6" height="7.6" viewBox="0 0 7.6 7.6"><path d="M0 0L7.6 7.6M7.6 0L0 7.6" stroke="#8c8c8c" stroke-width="1.1" fill="none" stroke-linecap="round"/></svg>
<div class="a ptab" style="left:729px;width:112px"><span class="j" style="width:56px">订单跟踪</span></div>
<svg style="left:815.2px;top:217.1px" width="7.6" height="7.6" viewBox="0 0 7.6 7.6"><path d="M0 0L7.6 7.6M7.6 0L0 7.6" stroke="#8c8c8c" stroke-width="1.1" fill="none" stroke-linecap="round"/></svg>
<div class="a ptab on" style="left:845px;width:112px"><span class="j" style="width:56px">仓库托盘</span></div>
<svg style="left:931.2px;top:217.1px" width="7.6" height="7.6" viewBox="0 0 7.6 7.6"><path d="M0 0L7.6 7.6M7.6 0L0 7.6" stroke="#8c8c8c" stroke-width="1.1" fill="none" stroke-linecap="round"/></svg>
<div class="a ptab" style="left:961px;width:154px"><span class="j" style="width:98px">全部订单（新）</span></div>
<svg style="left:1089.2px;top:217.1px" width="7.6" height="7.6" viewBox="0 0 7.6 7.6"><path d="M0 0L7.6 7.6M7.6 0L0 7.6" stroke="#8c8c8c" stroke-width="1.1" fill="none" stroke-linecap="round"/></svg>
<div class="a " id="search"></div>
<div class="a lbl" style="left:112px"><span class="j" style="width:56px">托盘名称</span><span style="margin-left:2.5px">:</span></div>
<div class="a inp" style="left:182px"></div>
<div class="a lbl" style="left:590px"><span class="j" style="width:56px">托盘编号</span><span style="margin-left:2.5px">:</span></div>
<div class="a inp" style="left:660px"></div>
<div class="a lbl" style="left:1068px"><span class="j" style="width:56px">仓库代码</span><span style="margin-left:2.5px">:</span></div>
<div class="a inp" style="left:1138px"></div>
<div class="a " id="f20" style="left:1150.5px;top:261px;line-height:18px;font-size:14px;letter-spacing:0.141px;width:37.16px;text-align-last:justify">NG01</div>
<svg style="left:1459px;top:264px" width="11" height="7" viewBox="0 0 11 7"><path d="M.5 .5L5.5 6 10.5 .5" stroke="#a6a6a6" stroke-width="1.1" fill="none"/></svg>
<div class="a btn" style="left:1723px"><span class="j" style="width:32px">重 置</span></div>
<div class="a btn p" style="left:1795px"><span class="j" style="width:32px">查 询</span></div>
<div class="a " style="left:56px;top:291px;width:1920px;height:6px;background:#e9ecf0"></div>
<div class="a " id="card"></div>
<div class="a " style="left:1792px;top:313px;width:82px;height:32px;background:#1677ff;border-radius:2px;color:#fff;font-size:14px;line-height:32px;padding-left:38px;box-shadow:0 2px 0 rgba(0,0,0,.04)"><span class="j" style="width:28px">新增</span></div>
<svg style="left:1810px;top:323px" width="11" height="11" viewBox="0 0 11 11"><path d="M5.5 0V11M0 5.5H11" stroke="#fff" stroke-width="1.7" fill="none"/></svg>
<svg style="left:1898px;top:322px" width="14" height="14" viewBox="0 0 14 14"><circle cx="7" cy="7" r="2.1" stroke="#262626" stroke-width="1.1" fill="none"/><path d="M5.8 .8h2.4l.4 1.6 1.3.7 1.5-.6 1.3 2.1-1.2 1.1v1.6l1.2 1.1-1.3 2.1-1.5-.6-1.3.7-.4 1.6H5.8l-.4-1.6-1.3-.7-1.5.6-1.3-2.1 1.2-1.1V5.7L1.3 4.6l1.3-2.1 1.5.6 1.3-.7z" stroke="#262626" stroke-width="1.1" fill="none" stroke-linejoin="round"/></svg>
<svg style="left:1932px;top:321px" width="16" height="16" viewBox="0 0 16 16"><path d="M14 5A7 7 0 1 0 14.8 9.5" stroke="#262626" stroke-width="1.2" fill="none"/><path d="M14.8 2v3.6h-3.6" stroke="#262626" stroke-width="1.2" fill="none"/></svg>
<div class="a " id="thead"></div>
<div class="a th" style="left:88.3px;width:56px;text-align-last:justify">托盘名称</div>
<div class="a ths" style="left:285.3px"></div>
<div class="a th" style="left:294.6px;width:84px;text-align-last:justify">托盘英文名称</div>
<div class="a ths" style="left:491.7px"></div>
<div class="a th" style="left:501.0px;width:56px;text-align-last:justify">托盘编号</div>
<div class="a ths" style="left:698.0px"></div>
<div class="a th" style="left:707.3px;width:56px;text-align-last:justify">仓库代码</div>
<div class="a ths" style="left:904.3px"></div>
<div class="a th" style="left:913.6px;width:28px;text-align-last:justify">区域</div>
<div class="a ths" style="left:1110.7px"></div>
<div class="a th" style="left:1120.0px;width:28px;text-align-last:justify">状态</div>
<div class="a ths" style="left:1317.0px"></div>
<div class="a th" style="left:1326.3px;width:56px;text-align-last:justify">是否使用</div>
<div class="a ths" style="left:1523.3px"></div>
<div class="a th" style="left:1532.6px;width:28px;text-align-last:justify">备注</div>
<div class="a ths" style="left:1729.7px"></div>
<div class="a th" style="left:1739.0px;width:28px;text-align-last:justify">操作</div>
<div class="a row h" style="top:400px"></div>
<div class="a c" id="f21" style="left:88.3px;top:400px;letter-spacing:0.636px;width:69.56px;text-align-last:justify">NG-test12</div>
<div class="a c" id="f22" style="left:294.6px;top:400px;letter-spacing:0.636px;width:69.56px;text-align-last:justify">NG-test12</div>
<div class="a c" id="f23" style="left:501.0px;top:400px;letter-spacing:0.636px;width:69.56px;text-align-last:justify">NG-test12</div>
<div class="a c" id="f24" style="left:707.3px;top:400px;letter-spacing:0.141px;width:37.16px;text-align-last:justify">NG01</div>
<div class="a c" id="f25" style="left:913.6px;top:400px;letter-spacing:0.814px;width:61.73px;text-align-last:justify">NG-C-02</div>
<div class="a c" style="left:1120.0px;top:400px;width:28px;text-align-last:justify">正常</div>
<div class="a dot" style="left:1326px;top:417px"></div>
<div class="a c" style="left:1340px;top:400px">否</div>
<div class="a c" style="left:1532.5px;top:400px">-</div>
<div class="a c lk" style="left:1739px;top:400px;width:28px;text-align-last:justify">编辑</div>
<div class="a c lk" style="left:1782.5px;top:400px;width:28px;text-align-last:justify">删除</div>
<div class="a row e" style="top:439px"></div>
<div class="a c" id="f26" style="left:88.3px;top:439px;letter-spacing:0.767px;width:69.69px;text-align-last:justify">NG-test11</div>
<div class="a c" id="f27" style="left:294.6px;top:439px;letter-spacing:0.767px;width:69.69px;text-align-last:justify">NG-test11</div>
<div class="a c" id="f28" style="left:501.0px;top:439px;letter-spacing:0.767px;width:69.69px;text-align-last:justify">NG-test11</div>
<div class="a c" id="f29" style="left:707.3px;top:439px;letter-spacing:0.141px;width:37.16px;text-align-last:justify">NG01</div>
<div class="a c" id="f30" style="left:913.6px;top:439px;letter-spacing:0.764px;width:61.38px;text-align-last:justify">NG-C-01</div>
<div class="a c" style="left:1120.0px;top:439px;width:28px;text-align-last:justify">正常</div>
<div class="a dot g" style="left:1326px;top:456px"></div>
<div class="a c" style="left:1340px;top:439px">是</div>
<div class="a c" style="left:1532.5px;top:439px">-</div>
<div class="a c lk" style="left:1739px;top:439px;width:28px;text-align-last:justify">编辑</div>
<div class="a c lk" style="left:1782.5px;top:439px;width:28px;text-align-last:justify">删除</div>
<div class="a row" style="top:478px"></div>
<div class="a c" id="f31" style="left:88.3px;top:478px;letter-spacing:0.636px;width:69.56px;text-align-last:justify">NG-test10</div>
<div class="a c" id="f32" style="left:294.6px;top:478px;letter-spacing:0.636px;width:69.56px;text-align-last:justify">NG-test10</div>
<div class="a c" id="f33" style="left:501.0px;top:478px;letter-spacing:0.636px;width:69.56px;text-align-last:justify">NG-test10</div>
<div class="a c" id="f34" style="left:707.3px;top:478px;letter-spacing:0.141px;width:37.16px;text-align-last:justify">NG01</div>
<div class="a c" id="f35" style="left:913.6px;top:478px;letter-spacing:0.764px;width:61.38px;text-align-last:justify">NG-C-01</div>
<div class="a c" style="left:1120.0px;top:478px;width:28px;text-align-last:justify">正常</div>
<div class="a dot g" style="left:1326px;top:495px"></div>
<div class="a c" style="left:1340px;top:478px">是</div>
<div class="a c" style="left:1532.5px;top:478px">-</div>
<div class="a c lk" style="left:1739px;top:478px;width:28px;text-align-last:justify">编辑</div>
<div class="a c lk" style="left:1782.5px;top:478px;width:28px;text-align-last:justify">删除</div>
<div class="a row e" style="top:517px"></div>
<div class="a c" id="f36" style="left:88.3px;top:517px;letter-spacing:0.636px;width:69.56px;text-align-last:justify">NG-test09</div>
<div class="a c" id="f37" style="left:294.6px;top:517px;letter-spacing:0.636px;width:69.56px;text-align-last:justify">NG-test09</div>
<div class="a c" id="f38" style="left:501.0px;top:517px;letter-spacing:0.636px;width:69.56px;text-align-last:justify">NG-test09</div>
<div class="a c" id="f39" style="left:707.3px;top:517px;letter-spacing:0.141px;width:37.16px;text-align-last:justify">NG01</div>
<div class="a c" id="f40" style="left:913.6px;top:517px;letter-spacing:0.764px;width:61.38px;text-align-last:justify">NG-C-01</div>
<div class="a c" style="left:1120.0px;top:517px;width:28px;text-align-last:justify">正常</div>
<div class="a dot" style="left:1326px;top:534px"></div>
<div class="a c" style="left:1340px;top:517px">否</div>
<div class="a c" style="left:1532.5px;top:517px">-</div>
<div class="a c lk" style="left:1739px;top:517px;width:28px;text-align-last:justify">编辑</div>
<div class="a c lk" style="left:1782.5px;top:517px;width:28px;text-align-last:justify">删除</div>
<div class="a row" style="top:556px"></div>
<div class="a c" id="f41" style="left:88.3px;top:556px;letter-spacing:0.636px;width:69.56px;text-align-last:justify">NG-test08</div>
<div class="a c" id="f42" style="left:294.6px;top:556px;letter-spacing:0.636px;width:69.56px;text-align-last:justify">NG-test08</div>
<div class="a c" id="f43" style="left:501.0px;top:556px;letter-spacing:0.636px;width:69.56px;text-align-last:justify">NG-test08</div>
<div class="a c" id="f44" style="left:707.3px;top:556px;letter-spacing:0.141px;width:37.16px;text-align-last:justify">NG01</div>
<div class="a c" id="f45" style="left:913.6px;top:556px;letter-spacing:0.764px;width:61.38px;text-align-last:justify">NG-C-01</div>
<div class="a c" style="left:1120.0px;top:556px;width:28px;text-align-last:justify">正常</div>
<div class="a dot" style="left:1326px;top:573px"></div>
<div class="a c" style="left:1340px;top:556px">否</div>
<div class="a c" style="left:1532.5px;top:556px">-</div>
<div class="a c lk" style="left:1739px;top:556px;width:28px;text-align-last:justify">编辑</div>
<div class="a c lk" style="left:1782.5px;top:556px;width:28px;text-align-last:justify">删除</div>
<div class="a row e" style="top:595px"></div>
<div class="a c" id="f46" style="left:88.3px;top:595px;letter-spacing:0.636px;width:69.56px;text-align-last:justify">NG-test07</div>
<div class="a c" id="f47" style="left:294.6px;top:595px;letter-spacing:0.636px;width:69.56px;text-align-last:justify">NG-test07</div>
<div class="a c" id="f48" style="left:501.0px;top:595px;letter-spacing:0.636px;width:69.56px;text-align-last:justify">NG-test07</div>
<div class="a c" id="f49" style="left:707.3px;top:595px;letter-spacing:0.141px;width:37.16px;text-align-last:justify">NG01</div>
<div class="a c" id="f50" style="left:913.6px;top:595px;letter-spacing:0.814px;width:61.73px;text-align-last:justify">NG-C-02</div>
<div class="a c" style="left:1120.0px;top:595px;width:28px;text-align-last:justify">正常</div>
<div class="a dot" style="left:1326px;top:612px"></div>
<div class="a c" style="left:1340px;top:595px">否</div>
<div class="a c" style="left:1532.5px;top:595px">-</div>
<div class="a c lk" style="left:1739px;top:595px;width:28px;text-align-last:justify">编辑</div>
<div class="a c lk" style="left:1782.5px;top:595px;width:28px;text-align-last:justify">删除</div>
<div class="a row" style="top:634px"></div>
<div class="a c" id="f51" style="left:88.3px;top:634px;letter-spacing:0.636px;width:69.56px;text-align-last:justify">NG-test06</div>
<div class="a c" id="f52" style="left:294.6px;top:634px;letter-spacing:0.636px;width:69.56px;text-align-last:justify">NG-test06</div>
<div class="a c" id="f53" style="left:501.0px;top:634px;letter-spacing:0.636px;width:69.56px;text-align-last:justify">NG-test06</div>
<div class="a c" id="f54" style="left:707.3px;top:634px;letter-spacing:0.141px;width:37.16px;text-align-last:justify">NG01</div>
<div class="a c" id="f55" style="left:913.6px;top:634px;letter-spacing:0.764px;width:61.38px;text-align-last:justify">NG-C-01</div>
<div class="a c" style="left:1120.0px;top:634px;width:28px;text-align-last:justify">正常</div>
<div class="a dot" style="left:1326px;top:651px"></div>
<div class="a c" style="left:1340px;top:634px">否</div>
<div class="a c" style="left:1532.5px;top:634px">-</div>
<div class="a c lk" style="left:1739px;top:634px;width:28px;text-align-last:justify">编辑</div>
<div class="a c lk" style="left:1782.5px;top:634px;width:28px;text-align-last:justify">删除</div>
<div class="a row e" style="top:673px"></div>
<div class="a c" id="f56" style="left:88.3px;top:673px;letter-spacing:0.636px;width:69.56px;text-align-last:justify">NG-test05</div>
<div class="a c" id="f57" style="left:294.6px;top:673px;letter-spacing:0.636px;width:69.56px;text-align-last:justify">NG-test05</div>
<div class="a c" id="f58" style="left:501.0px;top:673px;letter-spacing:0.636px;width:69.56px;text-align-last:justify">NG-test05</div>
<div class="a c" id="f59" style="left:707.3px;top:673px;letter-spacing:0.141px;width:37.16px;text-align-last:justify">NG01</div>
<div class="a c" id="f60" style="left:913.6px;top:673px;letter-spacing:0.764px;width:61.38px;text-align-last:justify">NG-C-01</div>
<div class="a c" style="left:1120.0px;top:673px;width:28px;text-align-last:justify">正常</div>
<div class="a dot" style="left:1326px;top:690px"></div>
<div class="a c" style="left:1340px;top:673px">否</div>
<div class="a c" style="left:1532.5px;top:673px">-</div>
<div class="a c lk" style="left:1739px;top:673px;width:28px;text-align-last:justify">编辑</div>
<div class="a c lk" style="left:1782.5px;top:673px;width:28px;text-align-last:justify">删除</div>
<div class="a row" style="top:712px"></div>
<div class="a c" id="f61" style="left:88.3px;top:712px;letter-spacing:0.636px;width:69.56px;text-align-last:justify">NG-test04</div>
<div class="a c" id="f62" style="left:294.6px;top:712px;letter-spacing:0.636px;width:69.56px;text-align-last:justify">NG-test04</div>
<div class="a c" id="f63" style="left:501.0px;top:712px;letter-spacing:0.636px;width:69.56px;text-align-last:justify">NG-test04</div>
<div class="a c" id="f64" style="left:707.3px;top:712px;letter-spacing:0.141px;width:37.16px;text-align-last:justify">NG01</div>
<div class="a c" id="f65" style="left:913.6px;top:712px;letter-spacing:0.764px;width:61.38px;text-align-last:justify">NG-C-01</div>
<div class="a c" style="left:1120.0px;top:712px;width:28px;text-align-last:justify">正常</div>
<div class="a dot" style="left:1326px;top:729px"></div>
<div class="a c" style="left:1340px;top:712px">否</div>
<div class="a c" style="left:1532.5px;top:712px">-</div>
<div class="a c lk" style="left:1739px;top:712px;width:28px;text-align-last:justify">编辑</div>
<div class="a c lk" style="left:1782.5px;top:712px;width:28px;text-align-last:justify">删除</div>
<div class="a row e" style="top:751px"></div>
<div class="a c" id="f66" style="left:88.3px;top:751px;letter-spacing:0.372px;width:44.69px;text-align-last:justify">XC002</div>
<div class="a c" id="f67" style="left:294.6px;top:751px;letter-spacing:0.372px;width:44.69px;text-align-last:justify">XC002</div>
<div class="a c" id="f68" style="left:501.0px;top:751px;letter-spacing:0.372px;width:44.69px;text-align-last:justify">XC002</div>
<div class="a c" id="f69" style="left:707.3px;top:751px;letter-spacing:0.141px;width:37.16px;text-align-last:justify">NG01</div>
<div class="a c" id="f70" style="left:913.6px;top:751px;letter-spacing:0.764px;width:61.38px;text-align-last:justify">NG-C-01</div>
<div class="a c" style="left:1120.0px;top:751px;width:28px;text-align-last:justify">正常</div>
<div class="a dot" style="left:1326px;top:768px"></div>
<div class="a c" style="left:1340px;top:751px">否</div>
<div class="a c" style="left:1532.5px;top:751px">-</div>
<div class="a c lk" style="left:1739px;top:751px;width:28px;text-align-last:justify">编辑</div>
<div class="a c lk" style="left:1782.5px;top:751px;width:28px;text-align-last:justify">删除</div>
<div class="a row" style="top:790px"></div>
<div class="a c" id="f71" style="left:88.3px;top:790px;letter-spacing:-0.925px;width:15.29px;text-align-last:justify">A1</div>
<div class="a c" id="f72" style="left:294.6px;top:790px;letter-spacing:-0.925px;width:15.29px;text-align-last:justify">A1</div>
<div class="a c" id="f73" style="left:501.0px;top:790px;letter-spacing:-0.925px;width:15.29px;text-align-last:justify">A1</div>
<div class="a c" id="f74" style="left:707.3px;top:790px;letter-spacing:0.141px;width:37.16px;text-align-last:justify">NG01</div>
<div class="a c" id="f75" style="left:913.6px;top:790px;letter-spacing:0.814px;width:61.73px;text-align-last:justify">NG-C-02</div>
<div class="a c" style="left:1120.0px;top:790px;width:28px;text-align-last:justify">正常</div>
<div class="a dot" style="left:1326px;top:807px"></div>
<div class="a c" style="left:1340px;top:790px">否</div>
<div class="a c" style="left:1532.5px;top:790px">-</div>
<div class="a c lk" style="left:1739px;top:790px;width:28px;text-align-last:justify">编辑</div>
<div class="a c lk" style="left:1782.5px;top:790px;width:28px;text-align-last:justify">删除</div>
<div class="a row e" style="top:829px"></div>
<div class="a c" id="f76" style="left:88.3px;top:829px;letter-spacing:-0.125px;width:16.89px;text-align-last:justify">A2</div>
<div class="a c" id="f77" style="left:294.6px;top:829px;letter-spacing:-0.125px;width:16.89px;text-align-last:justify">A2</div>
<div class="a c" id="f78" style="left:501.0px;top:829px;letter-spacing:-0.125px;width:16.89px;text-align-last:justify">A2</div>
<div class="a c" id="f79" style="left:707.3px;top:829px;letter-spacing:0.141px;width:37.16px;text-align-last:justify">NG01</div>
<div class="a c" id="f80" style="left:913.6px;top:829px;letter-spacing:0.814px;width:61.73px;text-align-last:justify">NG-C-02</div>
<div class="a c" style="left:1120.0px;top:829px;width:28px;text-align-last:justify">正常</div>
<div class="a dot" style="left:1326px;top:846px"></div>
<div class="a c" style="left:1340px;top:829px">否</div>
<div class="a c" style="left:1532.5px;top:829px">-</div>
<div class="a c lk" style="left:1739px;top:829px;width:28px;text-align-last:justify">编辑</div>
<div class="a c lk" style="left:1782.5px;top:829px;width:28px;text-align-last:justify">删除</div>
<div class="a row" style="top:868px"></div>
<div class="a c" id="f81" style="left:88.3px;top:868px;letter-spacing:0.636px;width:69.56px;text-align-last:justify">NG-test03</div>
<div class="a c" id="f82" style="left:294.6px;top:868px;letter-spacing:0.636px;width:69.56px;text-align-last:justify">NG-test03</div>
<div class="a c" id="f83" style="left:501.0px;top:868px;letter-spacing:0.636px;width:69.56px;text-align-last:justify">NG-test03</div>
<div class="a c" id="f84" style="left:707.3px;top:868px;letter-spacing:0.141px;width:37.16px;text-align-last:justify">NG01</div>
<div class="a c" id="f85" style="left:913.6px;top:868px;letter-spacing:0.764px;width:61.38px;text-align-last:justify">NG-C-01</div>
<div class="a c" style="left:1120.0px;top:868px;width:28px;text-align-last:justify">正常</div>
<div class="a dot" style="left:1326px;top:885px"></div>
<div class="a c" style="left:1340px;top:868px">否</div>
<div class="a c" style="left:1532.5px;top:868px">-</div>
<div class="a c lk" style="left:1739px;top:868px;width:28px;text-align-last:justify">编辑</div>
<div class="a c lk" style="left:1782.5px;top:868px;width:28px;text-align-last:justify">删除</div>
<div class="a row e" style="top:907px"></div>
<div class="a c" id="f86" style="left:88.3px;top:907px;letter-spacing:0.636px;width:69.56px;text-align-last:justify">NG-test02</div>
<div class="a c" id="f87" style="left:294.6px;top:907px;letter-spacing:0.636px;width:69.56px;text-align-last:justify">NG-test02</div>
<div class="a c" id="f88" style="left:501.0px;top:907px;letter-spacing:0.636px;width:69.56px;text-align-last:justify">NG-test02</div>
<div class="a c" id="f89" style="left:707.3px;top:907px;letter-spacing:0.141px;width:37.16px;text-align-last:justify">NG01</div>
<div class="a c" id="f90" style="left:913.6px;top:907px;letter-spacing:0.764px;width:61.38px;text-align-last:justify">NG-C-01</div>
<div class="a c" style="left:1120.0px;top:907px;width:28px;text-align-last:justify">正常</div>
<div class="a dot" style="left:1326px;top:924px"></div>
<div class="a c" style="left:1340px;top:907px">否</div>
<div class="a c" style="left:1532.5px;top:907px">-</div>
<div class="a c lk" style="left:1739px;top:907px;width:28px;text-align-last:justify">编辑</div>
<div class="a c lk" style="left:1782.5px;top:907px;width:28px;text-align-last:justify">删除</div>
<div class="a row" style="top:946px"></div>
<div class="a c" id="f91" style="left:88.3px;top:946px;letter-spacing:0.247px;width:44.07px;text-align-last:justify">XC001</div>
<div class="a c" id="f92" style="left:294.6px;top:946px;letter-spacing:0.247px;width:44.07px;text-align-last:justify">XC001</div>
<div class="a c" id="f93" style="left:501.0px;top:946px;letter-spacing:0.247px;width:44.07px;text-align-last:justify">XC001</div>
<div class="a c" id="f94" style="left:707.3px;top:946px;letter-spacing:0.141px;width:37.16px;text-align-last:justify">NG01</div>
<div class="a c" id="f95" style="left:913.6px;top:946px;letter-spacing:0.764px;width:61.38px;text-align-last:justify">NG-C-01</div>
<div class="a c" style="left:1120.0px;top:946px;width:28px;text-align-last:justify">正常</div>
<div class="a dot" style="left:1326px;top:963px"></div>
<div class="a c" style="left:1340px;top:946px">否</div>
<div class="a c" style="left:1532.5px;top:946px">-</div>
<div class="a c lk" style="left:1739px;top:946px;width:28px;text-align-last:justify">编辑</div>
<div class="a c lk" style="left:1782.5px;top:946px;width:28px;text-align-last:justify">删除</div>
<div class="a row e" style="top:985px"></div>
<div class="a c" id="f96" style="left:88.3px;top:985px;letter-spacing:0.561px;width:52.18px;text-align-last:justify">NG-test</div>
<div class="a c" id="f97" style="left:294.6px;top:985px;letter-spacing:0.561px;width:52.18px;text-align-last:justify">NG-test</div>
<div class="a c" id="f98" style="left:501.0px;top:985px;letter-spacing:0.561px;width:52.18px;text-align-last:justify">NG-test</div>
<div class="a c" id="f99" style="left:707.3px;top:985px;letter-spacing:0.141px;width:37.16px;text-align-last:justify">NG01</div>
<div class="a c" id="f100" style="left:913.6px;top:985px;letter-spacing:0.764px;width:61.38px;text-align-last:justify">NG-C-01</div>
<div class="a c" style="left:1120.0px;top:985px;width:28px;text-align-last:justify">正常</div>
<div class="a dot" style="left:1326px;top:1002px"></div>
<div class="a c" style="left:1340px;top:985px">否</div>
<div class="a c" style="left:1532.5px;top:985px">-</div>
<div class="a c lk" style="left:1739px;top:985px;width:28px;text-align-last:justify">编辑</div>
<div class="a c lk" style="left:1782.5px;top:985px;width:28px;text-align-last:justify">删除</div>
<div class="a " id="track"></div>
<div class="a " id="thumb"></div>
<svg style="left:0;top:0" width="2032" height="1167" viewBox="0 0 2032 1167"><rect x="1276.1" y="522.3" width="129.1" height="33.6" fill="none" stroke="#d2000f" stroke-width="3.7" rx="1.5"/><path d="M1238.3 481.8L1304.5 520.5" stroke="#d2000f" stroke-width="3.8" fill="none"/><path d="M1318 529.5L1298 526.6 1304.7 520.2 1305.9 513.1z" fill="#d2000f"/></svg>
<svg style="left:1943px;top:619px" width="22" height="24" viewBox="0 0 22 24"><path d="M10 .5L1.5 12 10 23.5M20 .5L11.5 12 20 23.5" stroke="#858585" stroke-width="2.1" fill="none" opacity=".9"/></svg>
<div class="a " id="f101" style="left:1638.5px;top:1053px;line-height:18px;font-size:14px;letter-spacing:0.497px;width:141.02px;text-align-last:justify">第 1-18 条/总共 18 条</div>
<svg style="left:1795px;top:1056px" width="8" height="12" viewBox="0 0 8 12"><path d="M7 .5L1 6 7 11.5" stroke="#bfbfbf" stroke-width="1.1" fill="none"/></svg>
<div class="a " style="left:1811px;top:1049px;width:24px;height:24px;border:1px solid #1677ff;border-radius:2px;color:#1677ff;text-align:center;line-height:24px;font-size:14px">1</div>
<svg style="left:1843px;top:1056px" width="8" height="12" viewBox="0 0 8 12"><path d="M1 .5L7 6 1 11.5" stroke="#bfbfbf" stroke-width="1.1" fill="none"/></svg>
<div class="a " style="left:1861px;top:1049px;width:91px;height:24px;border:1px solid #d9d9d9;border-radius:2px"></div>
<div class="a " id="f102" style="left:1870px;top:1050px;line-height:25px;font-size:14px;letter-spacing:0.088px;width:51.91px;text-align-last:justify">20 条/页</div>
<svg style="left:1930px;top:1058px" width="11" height="7" viewBox="0 0 11 7"><path d="M.5 .5L5.5 6 10.5 .5" stroke="#bfbfbf" stroke-width="1.1" fill="none"/></svg>
<div class="a " style="left:56px;top:1089px;width:1920px;height:3px;background:#e9ecf0"></div>
<div class="a " style="left:56px;top:38px;width:1920px;height:1055px;border-radius:7px 7px 10px 10px;box-shadow:inset 0 0 0 1px rgba(255,255,255,.25)"></div>
</div>
</body></html>
